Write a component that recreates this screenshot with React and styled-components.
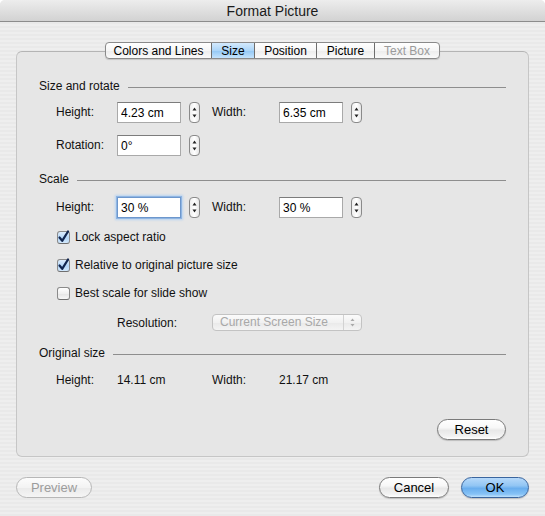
import React from 'react'
import styled, { createGlobalStyle, css } from 'styled-components'

const GlobalStyle = createGlobalStyle`
  html, body {
    margin: 0;
    padding: 0;
    background: #ffffff;
  }
`

const Window = styled.div`
  width: 545px;
  height: 516px;
  display: flex;
  flex-direction: column;
  border-radius: 5px 5px 0 0;
  overflow: hidden;
  background: repeating-linear-gradient(to bottom, #eeeeee 0, #eeeeee 2px, #e9e9e9 2px, #e9e9e9 4px);
  font-family: 'Liberation Sans', Arial, sans-serif;
  font-size: 12px;
  color: #111111;
`

const TitleBar = styled.div`
  height: 21px;
  flex: none;
  border-bottom: 1px solid #8c8c8c;
  background: linear-gradient(#ededed, #d2d2d2);
  text-align: center;
  line-height: 22px;
  font-size: 14px;
  color: #1a1a1a;
`

const Content = styled.div`
  padding: 20px 16px 0;
  display: flex;
  flex-direction: column;
`

const TabStrip = styled.div`
  align-self: center;
  display: flex;
  height: 15px;
  margin-bottom: -8px;
  position: relative;
  z-index: 1;
  border: 1px solid #8a8a8a;
  border-radius: 4px;
  overflow: hidden;
  box-shadow: 0 1px 1px rgba(0, 0, 0, 0.15);
  background: linear-gradient(#ffffff, #f6f6f6 50%, #ececec 51%, #fafafa);
`

const Tab = styled.div`
  width: ${p => p.$w}px;
  box-sizing: border-box;
  display: flex;
  align-items: center;
  justify-content: center;
  font-size: 12px;
  color: ${p => (p.$disabled ? '#9b9b9b' : '#000000')};

  & + & {
    border-left: 1px solid #6e6e6e;
  }

  ${p => p.$selected && css`
    background: linear-gradient(#d4eafd, #acd5f8 50%, #92c7f4 51%, #c4e3fd);
    box-shadow: inset 0 0 0 0 #5d8fc9;
  `}
`

const Panel = styled.div`
  height: 406px;
  box-sizing: border-box;
  border: 1px solid #c6c6c6;
  border-top-color: #b4b4b4;
  border-radius: 6px;
  background: #e6e6e6;
  padding: 27px 22px 16px;
  display: flex;
  flex-direction: column;
`

const SectionHeader = styled.div`
  display: flex;
  align-items: center;
  height: 14px;
  margin-top: ${p => p.$mt || 0}px;

  &::after {
    content: '';
    flex: 1;
    height: 1px;
    background: #8e8e8e;
    margin: 3px 0 0 8px;
  }
`

const Row = styled.div`
  display: flex;
  align-items: center;
  height: ${p => p.$h || 22}px;
  margin-top: ${p => p.$mt || 0}px;
  padding-left: ${p => p.$indent || 17}px;
`

const Label = styled.span`
  width: ${p => p.$w}px;
  flex: none;
`

const TextField = styled.input`
  width: 64px;
  height: 21px;
  box-sizing: border-box;
  margin: 0;
  padding: 1px 0 0 3px;
  border: 1px solid #a9a9a9;
  border-top-color: #7c7c7c;
  background: #ffffff;
  font-family: 'Liberation Sans', Arial, sans-serif;
  font-size: 12px;
  color: #000000;
  outline: none;

  ${p => p.$focused && css`
    border-color: #6d97cc;
    box-shadow: 0 0 0 1px #8fb5e3, 0 0 2px 2px #b8d3f1;
  `}
`

const Stepper = styled.div`
  width: 11px;
  height: 21px;
  box-sizing: border-box;
  flex: none;
  margin: 0 ${p => p.$mr || 0}px 0 8px;
  border: 1px solid #8a8a8a;
  border-radius: 4px;
  background: linear-gradient(to right, #eeeeee, #ffffff 50%, #e6e6e6);
  display: flex;
  align-items: center;
  justify-content: center;
`

const CheckRow = styled.label`
  display: flex;
  align-items: center;
  gap: 5px;
  height: 16px;
  margin-top: ${p => p.$mt || 0}px;
  padding-left: 18px;
`

const Box = styled.span`
  width: 13px;
  height: 13px;
  box-sizing: border-box;
  flex: none;
  border: 1px solid #8a8a8a;
  border-bottom-color: #6f6f6f;
  border-radius: 3px;
  display: flex;
  align-items: center;
  justify-content: center;
  background: ${p => (p.$checked
    ? 'linear-gradient(#dcecfc, #b3d6f7 55%, #d3e8fc)'
    : 'linear-gradient(#ffffff, #f0f0f0 50%, #e4e4e4 51%, #f7f7f7)')};

  svg {
    overflow: visible;
  }
`

const Popup = styled.div`
  width: 150px;
  height: 17px;
  box-sizing: border-box;
  display: flex;
  border: 1px solid #c3c3c3;
  border-radius: 4px;
  background: linear-gradient(#fbfbfb, #f1f1f1 50%, #e9e9e9 51%, #f4f4f4);
  color: #a8a8a8;
  font-size: 12px;
`

const PopupText = styled.span`
  flex: 1;
  padding-left: 7px;
  line-height: 15px;
`

const PopupArrows = styled.span`
  width: 17px;
  border-left: 1px solid #d2d2d2;
  display: flex;
  align-items: center;
  justify-content: center;
`

const ResetRow = styled.div`
  margin-top: auto;
  display: flex;
  justify-content: flex-end;
`

const Footer = styled.div`
  margin-top: 20px;
  display: flex;
  align-items: center;
  justify-content: space-between;
`

const ButtonGroup = styled.div`
  display: flex;
  gap: 12px;
`

const PillButton = styled.button`
  width: ${p => p.$w}px;
  height: 21px;
  box-sizing: border-box;
  margin: 0;
  padding: 0;
  border-radius: 11px;
  border: 1px solid #7a7a7a;
  display: flex;
  align-items: center;
  justify-content: center;
  font-family: 'Liberation Sans', Arial, sans-serif;
  font-size: 13px;
  color: #000000;
  background: linear-gradient(#ffffff 0%, #f8f8f8 40%, #e8e8e8 55%, #f2f2f2 85%, #ffffff 100%);
  box-shadow: 0 1px 1px rgba(0, 0, 0, 0.18);

  ${p => p.$variant === 'primary' && css`
    border-color: #3a659e;
    background: linear-gradient(#b6d9fa 0%, #92c6f4 40%, #6aaeee 55%, #86c2f6 85%, #bfe2fd 100%);
  `}

  ${p => p.$variant === 'disabled' && css`
    border-color: #b7b7b7;
    color: #9c9c9c;
    box-shadow: none;
    background: linear-gradient(#fcfcfc, #f3f3f3 50%, #ebebeb 55%, #f5f5f5);
  `}
`

const StepperIcon = () => (
  <svg width='7' height='19' viewBox='0 0 7 19'>
    <polygon points='1.5,7.5 3.5,4.5 5.5,7.5' fill='#222222' />
    <polygon points='1.5,11.5 3.5,14.5 5.5,11.5' fill='#222222' />
  </svg>
)

const CheckMark = () => (
  <svg width='11' height='11' viewBox='0 0 11 11'>
    <path d='M1.5 5.5 L4.2 8.8 L10 -0.5' fill='none' stroke='#10254f' strokeWidth='2.2' strokeLinecap='round' strokeLinejoin='round' />
  </svg>
)

const Field = ({ value, focused, mr }) => (
  <>
    <TextField readOnly value={value} $focused={focused} />
    <Stepper $mr={mr}>
      <StepperIcon />
    </Stepper>
  </>
)

const Check = ({ checked, children, mt }) => (
  <CheckRow $mt={mt}>
    <Box $checked={checked}>{checked && <CheckMark />}</Box>
    {children}
  </CheckRow>
)

const tabs = [
  { label: 'Colors and Lines', w: 105 },
  { label: 'Size', w: 43, selected: true },
  { label: 'Position', w: 62 },
  { label: 'Picture', w: 58 },
  { label: 'Text Box', w: 65, disabled: true }
]

export default function App () {
  return (
    <>
      <GlobalStyle />
      <Window>
        <TitleBar>Format Picture</TitleBar>
        <Content>
          <TabStrip>
            {tabs.map(t => (
              <Tab key={t.label} $w={t.w} $selected={t.selected} $disabled={t.disabled}>
                {t.label}
              </Tab>
            ))}
          </TabStrip>
          <Panel>
            <SectionHeader>Size and rotate</SectionHeader>
            <Row $mt={8}>
              <Label $w={61}>Height:</Label>
              <Field value='4.23 cm' mr={12} />
              <Label $w={67}>Width:</Label>
              <Field value='6.35 cm' />
            </Row>
            <Row $mt={11}>
              <Label $w={61}>Rotation:</Label>
              <Field value='0°' />
            </Row>

            <SectionHeader $mt={16}>Scale</SectionHeader>
            <Row $mt={10}>
              <Label $w={61}>Height:</Label>
              <Field value='30 %' focused mr={12} />
              <Label $w={67}>Width:</Label>
              <Field value='30 %' />
            </Row>
            <Check checked mt={11}>Lock aspect ratio</Check>
            <Check checked mt={12}>Relative to original picture size</Check>
            <Check mt={12}>Best scale for slide show</Check>
            <Row $mt={13} $h={17} $indent={78}>
              <Label $w={95}>Resolution:</Label>
              <Popup>
                <PopupText>Current Screen Size</PopupText>
                <PopupArrows>
                  <svg width='7' height='13' viewBox='0 0 7 13'>
                    <polygon points='1.5,5 3.5,2.5 5.5,5' fill='#a9a9a9' />
                    <polygon points='1.5,8 3.5,10.5 5.5,8' fill='#a9a9a9' />
                  </svg>
                </PopupArrows>
              </Popup>
            </Row>

            <SectionHeader $mt={15}>Original size</SectionHeader>
            <Row $mt={12} $h={16}>
              <Label $w={61}>Height:</Label>
              <Label $w={95}>14.11 cm</Label>
              <Label $w={67}>Width:</Label>
              <Label $w={80}>21.17 cm</Label>
            </Row>

            <ResetRow>
              <PillButton $w={69}>Reset</PillButton>
            </ResetRow>
          </Panel>
          <Footer>
            <PillButton $w={76} $variant='disabled'>Preview</PillButton>
            <ButtonGroup>
              <PillButton $w={70}>Cancel</PillButton>
              <PillButton $w={68} $variant='primary'>OK</PillButton>
            </ButtonGroup>
          </Footer>
        </Content>
      </Window>
    </>
  )
}
